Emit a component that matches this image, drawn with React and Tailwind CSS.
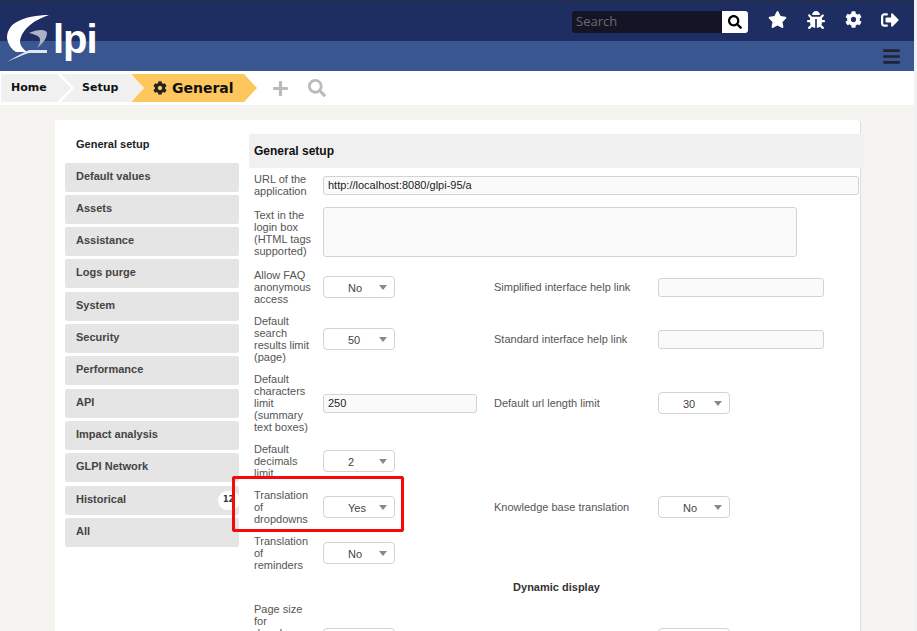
import { FaStar, FaBug, FaCog, FaSignOutAlt, FaSearch, FaPlus, FaBars } from "react-icons/fa";

const menuItems = ["Default values", "Assets", "Assistance", "Logs purge", "System", "Security", "Performance", "API", "Impact analysis", "GLPI Network", "Historical", "All"];

const Select = ({ value }) => (
    <div className="relative h-[22px] w-[72px] rounded-[4px] border border-[#d3d3d3] bg-white text-[11px] leading-[22px] text-[#444]">
        <span className="block pl-[24px]">{value}</span>
        <span className="absolute right-[7px] top-[8px] h-0 w-0 border-x-4 border-t-5 border-x-transparent border-t-[#888]"></span>
    </div>
);

const TextBox = ({ value, className }) => (
    <div className={`h-[19px] rounded-[3px] border border-[#d3d3d3] bg-[#fafafa] px-[4px] text-[11px] leading-[17px] text-[#222] ${className}`}>{value}</div>
);

const Row = ({ label, children, label2, children2, className = "py-[5px]" }) => (
    <div className={`grid grid-cols-[69px_171px_164px_1fr] items-center pl-[5px] ${className}`}>
        <div className="w-[58px] text-[11px] leading-[12px] text-[#555]">{label}</div>
        <div>{children}</div>
        <div className="text-[11px] leading-[12px] text-[#555]">{label2}</div>
        <div>{children2}</div>
    </div>
);

const Logo = () => (
    <div className="relative h-[64px] w-[100px]">
        <svg width="52" height="64" viewBox="0 0 52 64" className="absolute left-0 top-0">
            <path d="M49 15C38 15 24 17 15 23C9 27 7 33 7 38C8 44 11 49 16 52L24 52C27 52 27 52 27 52C22 48 20 45 20 41C21 35 24 30 30 25C36 20 43 17 49 15Z" fill="#fff" />
            <path d="M29 33C33 31 38 30 41 30C44 30 47 31 47 33C47 37 44 43 37 48C40 44 41 40 39 37C37 35 33 34 29 33Z" fill="#aab2c6" />
            <path d="M7 62C13 58 19 55 25 52L29 50C33 50 40 50 47 50L47 53C39 53 34 53 29 53C22 55 14 59 7 62Z" fill="#fff" fillOpacity="0.85" />
        </svg>
        <span className="absolute left-[53px] top-[17px] font-['Liberation_Sans'] text-[40px] leading-[44px] font-bold tracking-[-1px] text-white">lpi</span>
    </div>
);

const App = () => {
    return (
        <div className="relative h-[631px] w-[917px] overflow-hidden bg-[#f1f1f1] font-['Liberation_Sans',sans-serif]">
            <div className="w-[914px] border-t border-[#2b2f3a]">
                {/* header */}
                <div className="relative h-[40px] bg-[#1e2e62]">
                    <div className="absolute left-0 -top-[1px] z-10"><Logo /></div>
                    <div className="absolute left-[572px] top-[10px] flex h-[22px] w-[176px] overflow-hidden rounded-[3px]">
                        <div className="w-[150px] bg-[#131526] pl-[4px] font-['Open_Sans'] text-[13px] leading-[21px] text-[#6b6b6b]">Search</div>
                        <div className="flex w-[26px] items-center justify-center bg-white text-black"><FaSearch size={14} /></div>
                    </div>
                    <FaStar size={19} className="absolute left-[768px] top-[9px] text-white" />
                    <FaBug size={18} className="absolute left-[807px] top-[10px] text-white" />
                    <FaCog size={17} className="absolute left-[845px] top-[10px] text-white" />
                    <FaSignOutAlt size={18} className="absolute left-[881px] top-[10px] text-white" />
                </div>
                <div className="flex h-[30px] items-center justify-end bg-[#3a5690] pr-[13px] text-[#1f2430]">
                    <FaBars size={19} />
                </div>
                {/* breadcrumb */}
                <div className="flex h-[34px] items-center bg-white font-['DejaVu_Sans']">
                    <div className="ml-[1px] flex h-[28px] w-[70px] items-center bg-[#f0f0f0] pl-[10px] text-[11px] font-bold text-[#111] [clip-path:polygon(0_0,calc(100%-14px)_0,100%_50%,calc(100%-14px)_100%,0_100%)]">Home</div>
                    <div className="-ml-[10px] flex h-[28px] w-[83px] items-center bg-[#f0f0f0] pl-[21px] text-[11px] font-bold text-[#111] [clip-path:polygon(0_0,calc(100%-14px)_0,100%_50%,calc(100%-14px)_100%,0_100%,13px_50%)]">Setup</div>
                    <div className="-ml-[13px] flex h-[28px] w-[126px] items-center gap-[5px] bg-[#fdc75d] pl-[22px] text-[14px] font-bold text-[#111] [clip-path:polygon(0_0,calc(100%-13px)_0,100%_50%,calc(100%-13px)_100%,0_100%,13px_50%)]">
                        <FaCog size={14} className="text-[#222]" />
                        General
                    </div>
                    <FaPlus size={17} className="ml-[15px] text-[#bbb]" />
                    <FaSearch size={18} className="ml-[19px] text-[#bbb]" />
                </div>
                {/* page */}
                <div className="h-[526px] bg-[#f5f4f1] pl-[55px] pt-[15px]">
                    <div className="flex h-[520px] w-[805px] rounded-t-[3px] bg-white pl-[10px] pt-[14px] shadow-[1px_0_1px_#ddd]">
                        <div className="w-[184px] shrink-0 pr-[10px] text-[11px] font-bold">
                            <div className="h-[28.56px] pl-[11px] leading-[21px] text-[#222]">General setup</div>
                            {menuItems.map((item) => (
                                <div key={item} className="relative mb-[3.3px] h-[29px] rounded-[2px] bg-[#e5e5e5] pl-[11px] pt-[1px] leading-[24px] text-[#444]">
                                    {item}
                                    {item === "Historical" && (
                                        <span className="absolute -right-[1px] top-[5px] flex h-[19px] w-[22px] items-center rounded-full bg-white pl-[5px] font-['DejaVu_Sans'] text-[8px] text-[#333]">12</span>
                                    )}
                                </div>
                            ))}
                        </div>
                        <div className="w-[615px] shrink-0">
                            <div className="h-[34px] bg-[#f0f0f0] pl-[5px] text-[12px] font-bold leading-[34px] text-[#111]">General setup</div>
                            <Row label="URL of the application">
                                <div className="w-[536px]"><TextBox value="http://localhost:8080/glpi-95/a" /></div>
                            </Row>
                            <Row label="Text in the login box (HTML tags supported)" className="py-[6px]">
                                <div className="-mt-[1px] mb-[1px] h-[50px] w-[474px] rounded-[3px] border border-[#d3d3d3] bg-[#fafafa]"></div>
                            </Row>
                            <Row label="Allow FAQ anonymous access" label2="Simplified interface help link" children2={<TextBox className="w-[166px]" />}>
                                <Select value="No" />
                            </Row>
                            <Row label="Default search results limit (page)" label2="Standard interface help link" children2={<TextBox className="w-[166px]" />}>
                                <Select value="50" />
                            </Row>
                            <Row label="Default characters limit (summary text boxes)" label2="Default url length limit" children2={<Select value="30" />}>
                                <TextBox value="250" className="w-[154px]" />
                            </Row>
                            <Row label="Default decimals limit">
                                <Select value="2" />
                            </Row>
                            <Row label="Translation of dropdowns" label2="Knowledge base translation" children2={<Select value="No" />}>
                                <Select value="Yes" />
                            </Row>
                            <Row label="Translation of reminders">
                                <Select value="No" />
                            </Row>
                            <div className="py-[5px] text-center text-[11px] font-bold leading-[12px] text-[#333]">Dynamic display</div>
                            <Row label="Page size for dropdown (paging using scroll)" label2="Autocompletion of text fields" children2={<Select value="Yes" />}>
                                <Select value="100" />
                            </Row>
                        </div>
                    </div>
                </div>
            </div>
            <div className="pointer-events-none absolute left-[232px] top-[476px] h-[56px] w-[172px] rounded-[2px] border-[3px] border-[#f40a0a]"></div>
        </div>
    );
};

export default App;
